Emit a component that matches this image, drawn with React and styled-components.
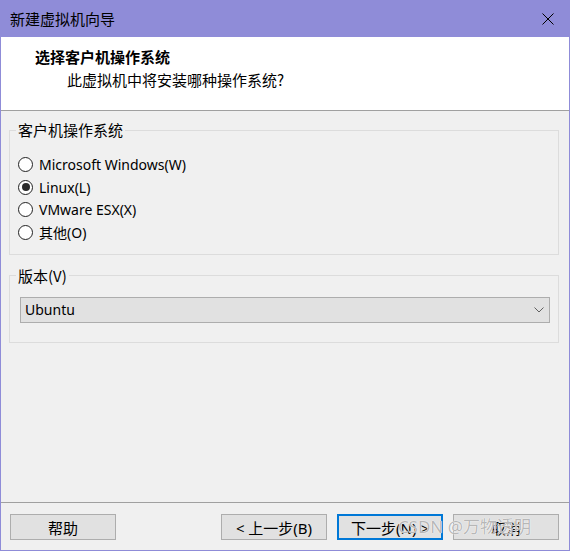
import React from "react";
import styled, { createGlobalStyle } from "styled-components";

const Global = createGlobalStyle`
  * { box-sizing: border-box; }
  body {
    margin: 0;
    background: #f0f0f0;
    font-family: "Noto Sans", "Noto Sans CJK SC", sans-serif;
    color: #000;
  }
`;

const Window = styled.div`
  position: relative;
  width: 570px;
  height: 551px;
  display: flex;
  flex-direction: column;
  border: 1px solid #8f8cd8;
  border-top: none;
  background: #f0f0f0;
`;

const TitleBar = styled.div`
  height: 37px;
  margin: 0 -1px;
  padding: 0 16px 0 10px;
  background: #8f8cd8;
  display: flex;
  align-items: center;
  justify-content: space-between;
  font-family: "Noto Sans CJK SC", sans-serif;
  font-size: 15px;
`;

const Close = styled.svg`
  width: 12px;
  height: 12px;
`;

const Header = styled.div`
  height: 74px;
  background: #fff;
  border-bottom: 1px solid #a0a0a0;
  padding: 10px 0 0 34px;
  font-family: "Noto Sans CJK SC", sans-serif;
`;

const Heading = styled.div`
  font-size: 15px;
  font-weight: 700;
  line-height: 20px;
`;

const Sub = styled.div`
  font-size: 15px;
  line-height: 20px;
  margin-top: 3px;
  padding-left: 32px;
`;

const Body = styled.div`
  flex: 1;
  padding: 10px 10px 0 8px;
  display: flex;
  flex-direction: column;
  gap: 12px;
`;

const Group = styled.fieldset`
  margin: 0;
  border: 1px solid #dcdcdc;
  padding: ${p => p.$pad};
  min-width: 0;
`;

const Legend = styled.legend`
  margin-left: -2px;
  padding: 0 2px;
  font-family: "Noto Sans CJK SC", sans-serif;
  font-size: 15px;
  line-height: 18px;
`;

const RadioRow = styled.label`
  height: 22.7px;
  display: flex;
  align-items: center;
  gap: 6px;
  font-size: 14px;
`;

const Circle = styled.span`
  width: 15px;
  height: 15px;
  border-radius: 50%;
  border: 1px solid #222;
  background: #fff;
  display: flex;
  align-items: center;
  justify-content: center;
  &::after {
    content: "";
    width: 8px;
    height: 8px;
    border-radius: 50%;
    background: ${p => (p.$on ? "#2b2b2b" : "transparent")};
  }
`;

const Select = styled.div`
  height: 26px;
  margin-left: 2px;
  background: #e1e1e1;
  border: 1px solid #adadad;
  display: flex;
  align-items: center;
  justify-content: space-between;
  padding: 0 5px 0 4px;
  font-size: 14px;
`;

const Footer = styled.div`
  border-top: 1px solid #a0a0a0;
  padding: 11px 10px 10px 9px;
  display: flex;
  gap: 10px;
`;

const Button = styled.div`
  width: 106px;
  height: 26px;
  background: #e1e1e1;
  border: ${p => (p.$focus ? "2px solid #0078d7" : "1px solid #adadad")};
  display: flex;
  align-items: center;
  justify-content: center;
  font-size: 15px;
  margin-left: ${p => (p.$push ? "auto" : "0")};
`;

const Mark = styled.div`
  position: absolute;
  right: 38px;
  bottom: 12px;
  font-size: 17px;
  color: rgba(170, 170, 170, 0.85);
  text-shadow: 0 0 1px #fff, 0 0 1px #fff;
  pointer-events: none;
`;

const options = [
  { label: "Microsoft Windows(W)" },
  { label: "Linux(L)", on: true },
  { label: "VMware ESX(X)" },
  { label: "其他(O)" },
];

export default function App() {
  return (
    <>
      <Global />
      <Window>
        <TitleBar>
          <span>新建虚拟机向导</span>
          <Close viewBox="0 0 12 12">
            <path d="M0.5 0.5 L11.5 11.5 M11.5 0.5 L0.5 11.5" stroke="#000" strokeWidth="1" />
          </Close>
        </TitleBar>
        <Header>
          <Heading>选择客户机操作系统</Heading>
          <Sub>此虚拟机中将安装哪种操作系统?</Sub>
        </Header>
        <Body>
          <Group $pad="14px 8px 10px 8px">
            <Legend>客户机操作系统</Legend>
            {options.map(o => (
              <RadioRow key={o.label}>
                <Circle $on={o.on} />
                {o.label}
              </RadioRow>
            ))}
          </Group>
          <Group $pad="12px 8px 19px 8px">
            <Legend>版本(V)</Legend>
            <Select>
              <span>Ubuntu</span>
              <svg width="10" height="6" viewBox="0 0 10 6">
                <path d="M0.5 0.5 L5 5 L9.5 0.5" fill="none" stroke="#606060" strokeWidth="1" />
              </svg>
            </Select>
          </Group>
        </Body>
        <Footer>
          <Button>帮助</Button>
          <Button $push>&lt; 上一步(B)</Button>
          <Button $focus>下一步(N) &gt;</Button>
          <Button>取消</Button>
        </Footer>
        <Mark>CSDN @万物透明</Mark>
      </Window>
    </>
  );
}
